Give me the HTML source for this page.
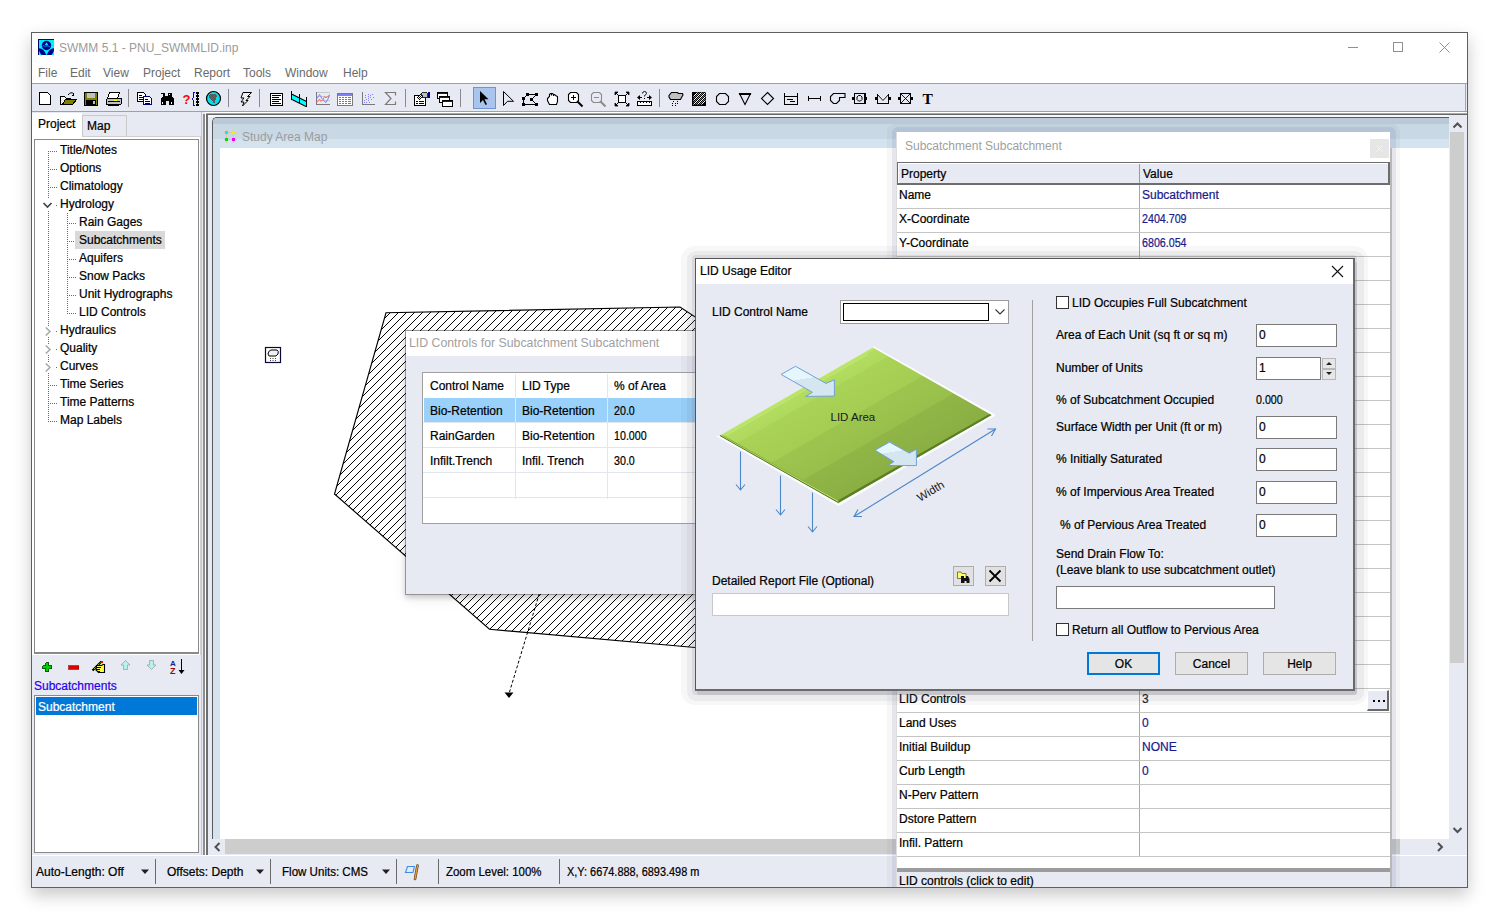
<!DOCTYPE html>
<html><head><meta charset="utf-8">
<style>
*{box-sizing:border-box}
html,body{margin:0;padding:0}
body{width:1500px;height:920px;background:#fff;position:relative;overflow:hidden;font-family:"Liberation Sans",sans-serif;font-size:12px;color:#000}
.a{position:absolute}
.t{position:absolute;white-space:nowrap;line-height:16px;font-size:12px;-webkit-text-stroke:0.22px currentColor}
.g{-webkit-text-stroke:0}
.lav{background:#e8eaf3}
svg{position:absolute;overflow:visible}
</style></head><body>
<!-- main window -->
<div class="a" style="left:31px;top:32px;width:1437px;height:856px;border:1px solid #5f5f5f;background:#fff;box-shadow:0 7px 16px rgba(0,0,0,0.22)"></div>
<!-- title -->
<svg style="left:38px;top:39px" width="16" height="16" viewBox="0 0 16 16"><rect x="0" y="0" width="16" height="16" fill="#000070"/><rect x="1" y="1" width="15" height="15" fill="#00f0ff"/><circle cx="8.5" cy="6.5" r="4.7" fill="#00008c"/><path d="M8.5 3.2L10.3 6.2H6.7Z" fill="#00f0ff"/><path d="M4.5 7.2q1-0.8 2 0t2 0 2 0 2 0" fill="none" stroke="#10a0e0" stroke-width="0.9"/><path d="M1 9.2Q6 9.5 8.3 16H3.5Q1 13 1 11Z" fill="#00008c"/><path d="M16 9.2Q11 9.5 8.7 16H13.5Q16 13 16 11Z" fill="#00008c"/></svg>
<div class="t g" style="left:59px;top:40px;color:#9b9b9b">SWMM 5.1 - PNU_SWMMLID.inp</div>
<div class="a" style="left:1348px;top:47px;width:10px;height:1px;background:#8f8f8f"></div>
<div class="a" style="left:1393px;top:42px;width:10px;height:10px;border:1px solid #8f8f8f"></div>
<svg style="left:1439px;top:42px" width="11" height="11"><path d="M0.5 0.5L10.5 10.5M10.5 0.5L0.5 10.5" stroke="#8f8f8f" stroke-width="1"/></svg>
<!-- menu -->
<div class="t g" style="left:38px;top:65px;color:#6a6a6a">File</div>
<div class="t g" style="left:70px;top:65px;color:#6a6a6a">Edit</div>
<div class="t g" style="left:103px;top:65px;color:#6a6a6a">View</div>
<div class="t g" style="left:143px;top:65px;color:#6a6a6a">Project</div>
<div class="t g" style="left:194px;top:65px;color:#6a6a6a">Report</div>
<div class="t g" style="left:243px;top:65px;color:#6a6a6a">Tools</div>
<div class="t g" style="left:285px;top:65px;color:#6a6a6a">Window</div>
<div class="t g" style="left:343px;top:65px;color:#6a6a6a">Help</div>
<!-- toolbar -->
<div class="a lav" style="left:32px;top:83px;width:1435px;height:29px;border-top:1px solid #a0a0a0;border-bottom:1px solid #a0a0a0"></div>
<div class="a" style="left:1465px;top:84px;width:1px;height:27px;background:#a8a8a8"></div>
<svg style="left:0;top:0" width="1500" height="120" viewBox="0 0 1500 120" shape-rendering="crispEdges">
<defs><pattern id="dith" width="2" height="2" patternUnits="userSpaceOnUse"><rect width="2" height="2" fill="#ffff00"/><rect width="1" height="1" fill="#fff"/><rect x="1" y="1" width="1" height="1" fill="#fff"/></pattern>
<pattern id="dithg" width="2" height="2" patternUnits="userSpaceOnUse"><rect width="2" height="2" fill="#2e8b3a"/><rect width="1" height="1" fill="#555"/><rect x="1" y="1" width="1" height="1" fill="#555"/></pattern>
<pattern id="dithk" width="2" height="2" patternUnits="userSpaceOnUse"><rect width="2" height="2" fill="#fff"/><rect width="1" height="1" fill="#000"/><rect x="1" y="1" width="1" height="1" fill="#000"/></pattern></defs>
<!-- new -->
<path d="M39.5 92.5H47.5L50.5 95.5V104.5H39.5Z" fill="#fff" stroke="#000" stroke-width="1.3"/>
<!-- open -->
<path d="M60.5 96.5H64.5L66 98H70.5V104.5H60.5Z" fill="url(#dith)" stroke="#000"/>
<path d="M62.5 104.5L65.5 99.5H76.5L72.5 104.5Z" fill="#808000" stroke="#000"/>
<path d="M68 95Q71 91 74 94" fill="none" stroke="#000" shape-rendering="auto"/><path d="M73.5 93v2.5h-2" fill="none" stroke="#000"/>
<!-- save -->
<rect x="84.5" y="92.5" width="13" height="13" fill="#808000" stroke="#000" stroke-width="1.2"/>
<rect x="87" y="93" width="8" height="5" fill="#c0c0c0"/>
<rect x="86" y="100" width="10" height="5" fill="#000"/><rect x="93" y="101" width="2" height="3" fill="#c0c0c0"/>
<!-- print -->
<path d="M109.5 92.5H119.5L117.5 98.5H107.5Z" fill="#fff" stroke="#000"/>
<rect x="106.5" y="98.5" width="15" height="6" rx="1.5" fill="#c0c0c0" stroke="#000"/>
<rect x="108" y="101" width="12" height="1" fill="#000"/><rect x="114" y="100" width="3" height="1" fill="#ffff00"/>
<rect x="108" y="104" width="11" height="2" fill="#000"/>
<rect x="128" y="89" width="1" height="18" fill="#8a8a8a"/>
<!-- copy -->
<path d="M137.5 92.5H143.5L145.5 94.5V101.5H137.5Z" fill="#fff" stroke="#000"/>
<rect x="139" y="95" width="3" height="1" fill="#000"/><rect x="139" y="97" width="4" height="1" fill="#000"/><rect x="139" y="99" width="4" height="1" fill="#000"/>
<path d="M143.5 96.5H149.5L151.5 98.5V104.5H143.5Z" fill="#fff" stroke="#000080"/>
<rect x="145" y="99" width="3" height="1" fill="#000"/><rect x="145" y="101" width="5" height="1" fill="#000"/><rect x="145" y="103" width="5" height="1" fill="#000"/>
<!-- binoculars -->
<path d="M161 93h4v3h3v-3h4v3l2 3v6h-5v-4h-3v4h-5v-6l2-3Z" fill="#000"/>
<rect x="162" y="94" width="1" height="1" fill="#fff"/><rect x="169" y="94" width="1" height="1" fill="#fff"/>
<rect x="162" y="102" width="1" height="2" fill="#fff"/><rect x="171" y="102" width="1" height="2" fill="#fff"/>
<!-- ?{ -->
<text x="182.5" y="104" font-family="Liberation Sans" font-weight="bold" font-size="13" fill="#ff0000" shape-rendering="auto">?</text>
<path d="M195 92.5h-1.5v5l-1.5 1.5 1.5 1.5v5h1.5" fill="none" stroke="#0000ff"/>
<rect x="196" y="92" width="3" height="2" fill="#000"/><rect x="196" y="95" width="3" height="2" fill="#000"/><rect x="196" y="98" width="3" height="2" fill="#000"/><rect x="196" y="101" width="3" height="2" fill="#000"/><rect x="196" y="104" width="3" height="2" fill="#000"/>
<rect x="197" y="92" width="1" height="14" fill="#000"/>
<!-- globe -->
<circle cx="213.5" cy="98.5" r="7" fill="#00e0f0" stroke="#000" stroke-width="1.2" shape-rendering="auto"/>
<path d="M209 95q4-3 8 0l-1 4l-2 5l-2-4l-3-2Z" fill="url(#dithg)"/>
<rect x="228" y="89" width="1" height="18" fill="#8a8a8a"/>
<!-- lightning -->
<path d="M243 92.5h8.5l-4 4h2.5l-4 4h2l-5.5 5.5l1.5-4h-3l3-4h-3Z" fill="url(#dith)" stroke="#000" stroke-linejoin="round" shape-rendering="auto"/>
<rect x="259" y="89" width="1" height="18" fill="#8a8a8a"/>
<!-- report -->
<rect x="270.5" y="93.5" width="12" height="12" fill="#fff" stroke="#000" stroke-width="1.1"/>
<rect x="272" y="95" width="9" height="1" fill="#000"/><rect x="272" y="97" width="7" height="1" fill="#000"/><rect x="272" y="99" width="9" height="1" fill="#000"/><rect x="272" y="101" width="7" height="1" fill="#000"/><rect x="272" y="103" width="9" height="1" fill="#000"/>
<!-- profile -->
<path d="M292 94L306 101V106L292 99Z" fill="#00ffff" shape-rendering="auto"/>
<path d="M292 94.3L306 101.3M292 99.5L306 106.5" stroke="#000" stroke-width="1.1" shape-rendering="auto"/>
<rect x="291" y="91" width="1" height="9" fill="#000"/><rect x="299" y="94" width="1" height="9" fill="#000"/><rect x="306" y="97" width="1" height="10" fill="#000"/>
<!-- graph gray -->
<rect x="317" y="92" width="13" height="1" fill="#c8c8c8"/><rect x="317" y="96" width="13" height="1" fill="#c8c8c8"/><rect x="317" y="100" width="13" height="1" fill="#c8c8c8"/>
<rect x="316" y="92" width="1" height="13" fill="#7a7a7a"/><rect x="316" y="104" width="14" height="1" fill="#7a7a7a"/>
<path d="M317 98.5L319.5 94.5L322 98.5L324 101L326 102.5L328 99L329.5 94.5" fill="none" stroke="#8080ff" shape-rendering="auto"/>
<path d="M317 102.5L319.5 99L321 101.5L323 99.5L324.5 96.5L326 98L328 96L329.5 96" fill="none" stroke="#ff7070" shape-rendering="auto"/>
<!-- table -->
<rect x="337.5" y="93.5" width="15" height="12" fill="#fff" stroke="#7a7a7a"/>
<rect x="338" y="94" width="14" height="2" fill="#8080ff"/>
<g fill="#7a7a7a"><rect x="339" y="97" width="2" height="1"/><rect x="342" y="97" width="2" height="1"/><rect x="345" y="97" width="2" height="1"/><rect x="348" y="97" width="3" height="1"/>
<rect x="339" y="99" width="2" height="1"/><rect x="342" y="99" width="2" height="1"/><rect x="345" y="99" width="2" height="1"/><rect x="348" y="99" width="3" height="1"/>
<rect x="339" y="101" width="2" height="1"/><rect x="342" y="101" width="2" height="1"/><rect x="345" y="101" width="2" height="1"/><rect x="348" y="101" width="3" height="1"/>
<rect x="339" y="103" width="2" height="1"/><rect x="342" y="103" width="2" height="1"/><rect x="345" y="103" width="2" height="1"/><rect x="348" y="103" width="3" height="1"/></g>
<!-- scatter -->
<rect x="362" y="92" width="1" height="13" fill="#7a7a7a"/><rect x="362" y="104" width="13" height="1" fill="#7a7a7a"/>
<g fill="#8080ff"><rect x="365" y="95" width="1" height="1"/><rect x="368" y="94" width="1" height="1"/><rect x="370" y="95" width="1" height="1"/><rect x="372" y="94" width="1" height="1"/><rect x="365" y="97" width="1" height="1"/><rect x="368" y="96" width="1" height="1"/><rect x="370" y="97" width="1" height="1"/><rect x="373" y="97" width="1" height="1"/><rect x="368" y="98" width="1" height="1"/><rect x="366" y="99" width="1" height="1"/><rect x="371" y="99" width="1" height="1"/><rect x="364" y="100" width="1" height="1"/><rect x="368" y="100" width="1" height="1"/><rect x="364" y="102" width="1" height="1"/><rect x="366" y="102" width="1" height="1"/><rect x="369" y="102" width="1" height="1"/></g>
<!-- sigma -->
<path d="M395.5 95.5V92.5H385.5L391 98.5L385.5 104.5H395.5V101.5" fill="none" stroke="#7a7a7a" stroke-width="1.2" shape-rendering="auto"/>
<rect x="405" y="89" width="1" height="18" fill="#8a8a8a"/>
<!-- properties -->
<rect x="414.5" y="95.5" width="11" height="10" fill="#fff" stroke="#000" stroke-width="1.1"/>
<rect x="416" y="101" width="2" height="1" fill="#000"/><rect x="419" y="101" width="5" height="1" fill="#000"/><rect x="416" y="103" width="2" height="1" fill="#000"/><rect x="419" y="103" width="5" height="1" fill="#000"/>
<path d="M416 98L421 93L424 96L419 100Z" fill="url(#dithk)"/>
<path d="M421.5 92.5H427V97.5H423Z" fill="#c0c0c0" stroke="#000" stroke-width="0.8"/>
<rect x="428" y="92" width="2" height="6" fill="#000090"/>
<!-- windows -->
<rect x="437.5" y="92.5" width="10" height="6" fill="#fff" stroke="#000"/><rect x="438" y="93" width="9" height="1" fill="#0000ff"/>
<rect x="439.5" y="96.5" width="10" height="6" fill="#fff" stroke="#000"/><rect x="440" y="97" width="9" height="1" fill="#0000ff"/>
<rect x="442.5" y="100.5" width="10" height="6" fill="#fff" stroke="#000"/><rect x="443" y="101" width="9" height="1" fill="#0000ff"/>
<rect x="460" y="89" width="1" height="18" fill="#8a8a8a"/>
<!-- select pressed -->
<rect x="473.5" y="87.5" width="22" height="21" fill="#a9c5ee" stroke="#6f95d0"/>
<path d="M480 91v12l3-3 2.5 5 1.5-0.8-2.5-5h4Z" fill="#000" shape-rendering="auto"/>
<!-- vertex -->
<path d="M503.5 91.5V105.5L507.5 101.3H513.5Z" fill="none" stroke="#000" shape-rendering="auto"/>
<!-- poly select -->
<path d="M527.5 94.5H536.5L531.5 99.5L536.5 104.5H523.5V98.5Z" fill="none" stroke="#000" shape-rendering="auto"/>
<rect x="526" y="93" width="3" height="3" fill="#000"/><rect x="535" y="93" width="3" height="3" fill="#000"/><rect x="522" y="97" width="3" height="3" fill="#000"/><rect x="530" y="98" width="3" height="3" fill="#000"/><rect x="522" y="103" width="3" height="3" fill="#000"/><rect x="535" y="103" width="3" height="3" fill="#000"/>
<!-- hand -->
<path d="M549.5 104.5L547.5 100.5V98.5L549.5 96.5V94.5L550.5 93.5H551.5V95.5V93.5H552.5L553.5 94.5V96V94.5L554.5 94.5L555.5 95.5L557.5 96.5V101.5L556.5 104.5Z" fill="#fff" stroke="#000" stroke-width="1.1" shape-rendering="auto"/>
<!-- zoom in -->
<path d="M570.5 92.5H576.5L578.5 94.5V100.5L576.5 102.5H570.5L568.5 100.5V94.5Z" fill="#fff" stroke="#000" stroke-width="1.1" shape-rendering="auto"/>
<rect x="571" y="97" width="5" height="1" fill="#000"/><rect x="573" y="95" width="1" height="5" fill="#000"/>
<path d="M577.5 101.5L582.5 106.5" stroke="#000" stroke-width="2" shape-rendering="auto"/>
<!-- zoom out -->
<path d="M593.5 92.5H599.5L601.5 94.5V100.5L599.5 102.5H593.5L591.5 100.5V94.5Z" fill="none" stroke="#8a8a8a" stroke-width="1.1" shape-rendering="auto"/>
<rect x="594" y="97" width="5" height="1" fill="#8a8a8a"/>
<path d="M600.5 101.5L605.5 106.5" stroke="#8a8a8a" stroke-width="2" shape-rendering="auto"/>
<!-- full extent -->
<rect x="618.5" y="95.5" width="7" height="7" fill="#fff" stroke="#000" stroke-width="1.5"/>
<path d="M615 92h3l-3 3Z M629 92h-3l3 3Z M615 106h3l-3-3Z M629 106h-3l3-3Z" fill="#000" stroke="#000" stroke-width="0.8" shape-rendering="auto"/>
<path d="M616 93l2 2M628 93l-2 2M616 105l2-2M628 105l-2-2" stroke="#000" shape-rendering="auto"/>
<!-- measure -->
<rect x="637.5" y="101.5" width="14" height="4" fill="#fff" stroke="#000" stroke-width="1.1"/>
<rect x="640" y="102" width="1" height="1" fill="#000"/><rect x="643" y="102" width="1" height="1" fill="#000"/><rect x="646" y="102" width="1" height="1" fill="#000"/><rect x="649" y="102" width="1" height="1" fill="#000"/>
<rect x="638" y="97" width="4" height="1" fill="#000"/><rect x="647" y="97" width="4" height="1" fill="#000"/>
<path d="M637 97.5L640 95V100Z M652 97.5L649 95V100Z" fill="#000" shape-rendering="auto"/>
<path d="M642.5 93.5Q642.5 91.5 644.5 91.5Q646.5 91.5 646.5 93.5Q646.5 94.5 644.5 95.5V96.5" fill="none" stroke="#000" stroke-width="0.9" shape-rendering="auto"/><rect x="644" y="98" width="1" height="1" fill="#000"/>
<rect x="659" y="89" width="1" height="18" fill="#8a8a8a"/>
<!-- rain gage -->
<path d="M671.5 92.5H677.5L678.5 93.5H682.5L683 95L681.5 97.5L680.5 99.5H670.5L669 97V95.5Z" fill="#c0c0c0" stroke="#000" stroke-width="1.1" shape-rendering="auto"/>
<g fill="#000"><rect x="673" y="101" width="1" height="1"/><rect x="677" y="101" width="1" height="1"/><rect x="672" y="103" width="1" height="1"/><rect x="675" y="103" width="1" height="1"/><rect x="677" y="103" width="1" height="1"/><rect x="672" y="105" width="1" height="1"/><rect x="675" y="105" width="1" height="1"/></g>
<!-- hatch -->
<rect x="692.5" y="92.5" width="13" height="13" fill="#000" stroke="#000"/>
<path d="M693.5 96.5L697.5 92.5M693.5 100.5L701.5 92.5M693.5 104.5L705.5 92.5M697.5 104.5L705.5 96.5M701.5 104.5L705.5 100.5" stroke="#fff" stroke-width="1" shape-rendering="auto"/>
<path d="M693.5 98.5L699.5 92.5M693.5 102.5L703.5 92.5M695.5 104.5L705.5 94.5M699.5 104.5L705.5 98.5" stroke="#999" stroke-width="0.9" shape-rendering="auto"/>
<!-- circle (octagon) -->
<path d="M719.5 93.5H725.5L728.5 96.5V101.5L725.5 104.5H719.5L716.5 101.5V96.5Z" fill="none" stroke="#000" stroke-width="1.1" shape-rendering="auto"/>
<!-- triangle -->
<path d="M739.5 93.5H750.5L745 104.5Z" fill="none" stroke="#000" stroke-width="1.1" shape-rendering="auto"/><rect x="739" y="93" width="12" height="2" fill="#000"/>
<!-- diamond -->
<path d="M767.5 92.5L773.5 98.5L767.5 104.5L761.5 98.5Z" fill="none" stroke="#000" stroke-width="1.1" shape-rendering="auto"/>
<!-- storage -->
<rect x="784" y="93" width="1" height="12" fill="#000"/><rect x="797" y="93" width="1" height="12" fill="#000"/><rect x="784" y="96" width="14" height="1" fill="#000"/><rect x="784" y="104" width="14" height="1" fill="#000"/>
<rect x="787" y="99" width="6" height="1" fill="#000"/><rect x="790" y="101" width="5" height="1" fill="#000"/>
<!-- conduit -->
<rect x="808" y="96" width="1" height="5" fill="#000"/><rect x="820" y="96" width="1" height="5" fill="#000"/><rect x="808" y="98" width="13" height="1" fill="#000"/>
<!-- pump -->
<path d="M833.5 93.5H845V97.5H839.5V100.5L836.5 103.5H833.5L830.5 100.5V96.5Z" fill="none" stroke="#000" stroke-width="1.1" shape-rendering="auto"/>
<!-- orifice -->
<rect x="854.5" y="93.5" width="10.5" height="10" fill="none" stroke="#000" stroke-width="1.1"/>
<path d="M858.5 95.5H860.5L862 97V99.5L860.5 101H858.5L857 99.5V97Z" fill="none" stroke="#000" stroke-width="1" shape-rendering="auto"/>
<rect x="852" y="97" width="2" height="3" fill="#000"/><rect x="865" y="97" width="2" height="3" fill="#000"/>
<!-- weir -->
<path d="M877.5 94V103.5H888.5V94" fill="none" stroke="#000" stroke-width="1.1"/>
<path d="M877.5 94.5L883 100.5L888.5 94.5" fill="none" stroke="#000" stroke-width="0.9" shape-rendering="auto"/>
<rect x="875" y="97" width="2" height="3" fill="#000"/><rect x="889" y="97" width="2" height="3" fill="#000"/>
<!-- outlet -->
<rect x="900.5" y="93.5" width="10" height="10" fill="none" stroke="#000" stroke-width="1.4"/>
<path d="M901 94L910 103M910 94L901 103" stroke="#000" stroke-width="0.9" shape-rendering="auto"/>
<rect x="898" y="97" width="2" height="3" fill="#000"/><rect x="911" y="97" width="2" height="3" fill="#000"/>
<!-- T -->
<text x="922.5" y="104" font-family="Liberation Serif" font-weight="bold" font-size="15.5" fill="#000" shape-rendering="auto">T</text>
</svg>


<!-- left panel -->
<div class="a" style="left:32px;top:112px;width:173px;height:744px;background:#e8eaf3"></div>
<div class="a" style="left:82px;top:115px;width:45px;height:21px;background:#e8eaf3;border:1px solid #c9c9c9;border-bottom:none"></div>
<div class="a" style="left:32px;top:113px;width:50px;height:24px;background:#fff"></div>
<div class="t" style="left:38px;top:116px">Project</div>
<div class="t" style="left:87px;top:118px">Map</div>
<div class="a" style="left:32px;top:136px;width:169px;height:519px;background:#fff;border-right:1px solid #cfcfcf"></div>
<div class="a" style="left:82px;top:136px;width:119px;height:1px;background:#cfcfcf"></div>
<div class="a" style="left:34px;top:139px;width:165px;height:515px;background:#fff;border:1px solid #8a8a8a;border-bottom:2px solid #8a8a8a"></div>
<svg style="left:0;top:0" width="220" height="440" shape-rendering="crispEdges">
<rect x="48" y="151" width="1" height="1" fill="#6a6a6a"/>
<rect x="48" y="153" width="1" height="1" fill="#6a6a6a"/>
<rect x="48" y="155" width="1" height="1" fill="#6a6a6a"/>
<rect x="48" y="157" width="1" height="1" fill="#6a6a6a"/>
<rect x="48" y="159" width="1" height="1" fill="#6a6a6a"/>
<rect x="48" y="161" width="1" height="1" fill="#6a6a6a"/>
<rect x="48" y="163" width="1" height="1" fill="#6a6a6a"/>
<rect x="48" y="165" width="1" height="1" fill="#6a6a6a"/>
<rect x="48" y="167" width="1" height="1" fill="#6a6a6a"/>
<rect x="48" y="169" width="1" height="1" fill="#6a6a6a"/>
<rect x="48" y="171" width="1" height="1" fill="#6a6a6a"/>
<rect x="48" y="173" width="1" height="1" fill="#6a6a6a"/>
<rect x="48" y="175" width="1" height="1" fill="#6a6a6a"/>
<rect x="48" y="177" width="1" height="1" fill="#6a6a6a"/>
<rect x="48" y="179" width="1" height="1" fill="#6a6a6a"/>
<rect x="48" y="181" width="1" height="1" fill="#6a6a6a"/>
<rect x="48" y="183" width="1" height="1" fill="#6a6a6a"/>
<rect x="48" y="185" width="1" height="1" fill="#6a6a6a"/>
<rect x="48" y="187" width="1" height="1" fill="#6a6a6a"/>
<rect x="48" y="189" width="1" height="1" fill="#6a6a6a"/>
<rect x="48" y="191" width="1" height="1" fill="#6a6a6a"/>
<rect x="48" y="193" width="1" height="1" fill="#6a6a6a"/>
<rect x="48" y="195" width="1" height="1" fill="#6a6a6a"/>
<rect x="48" y="197" width="1" height="1" fill="#6a6a6a"/>
<rect x="48" y="199" width="1" height="1" fill="#6a6a6a"/>
<rect x="48" y="201" width="1" height="1" fill="#6a6a6a"/>
<rect x="48" y="203" width="1" height="1" fill="#6a6a6a"/>
<rect x="48" y="205" width="1" height="1" fill="#6a6a6a"/>
<rect x="48" y="207" width="1" height="1" fill="#6a6a6a"/>
<rect x="48" y="209" width="1" height="1" fill="#6a6a6a"/>
<rect x="48" y="211" width="1" height="1" fill="#6a6a6a"/>
<rect x="48" y="213" width="1" height="1" fill="#6a6a6a"/>
<rect x="48" y="215" width="1" height="1" fill="#6a6a6a"/>
<rect x="48" y="217" width="1" height="1" fill="#6a6a6a"/>
<rect x="48" y="219" width="1" height="1" fill="#6a6a6a"/>
<rect x="48" y="221" width="1" height="1" fill="#6a6a6a"/>
<rect x="48" y="223" width="1" height="1" fill="#6a6a6a"/>
<rect x="48" y="225" width="1" height="1" fill="#6a6a6a"/>
<rect x="48" y="227" width="1" height="1" fill="#6a6a6a"/>
<rect x="48" y="229" width="1" height="1" fill="#6a6a6a"/>
<rect x="48" y="231" width="1" height="1" fill="#6a6a6a"/>
<rect x="48" y="233" width="1" height="1" fill="#6a6a6a"/>
<rect x="48" y="235" width="1" height="1" fill="#6a6a6a"/>
<rect x="48" y="237" width="1" height="1" fill="#6a6a6a"/>
<rect x="48" y="239" width="1" height="1" fill="#6a6a6a"/>
<rect x="48" y="241" width="1" height="1" fill="#6a6a6a"/>
<rect x="48" y="243" width="1" height="1" fill="#6a6a6a"/>
<rect x="48" y="245" width="1" height="1" fill="#6a6a6a"/>
<rect x="48" y="247" width="1" height="1" fill="#6a6a6a"/>
<rect x="48" y="249" width="1" height="1" fill="#6a6a6a"/>
<rect x="48" y="251" width="1" height="1" fill="#6a6a6a"/>
<rect x="48" y="253" width="1" height="1" fill="#6a6a6a"/>
<rect x="48" y="255" width="1" height="1" fill="#6a6a6a"/>
<rect x="48" y="257" width="1" height="1" fill="#6a6a6a"/>
<rect x="48" y="259" width="1" height="1" fill="#6a6a6a"/>
<rect x="48" y="261" width="1" height="1" fill="#6a6a6a"/>
<rect x="48" y="263" width="1" height="1" fill="#6a6a6a"/>
<rect x="48" y="265" width="1" height="1" fill="#6a6a6a"/>
<rect x="48" y="267" width="1" height="1" fill="#6a6a6a"/>
<rect x="48" y="269" width="1" height="1" fill="#6a6a6a"/>
<rect x="48" y="271" width="1" height="1" fill="#6a6a6a"/>
<rect x="48" y="273" width="1" height="1" fill="#6a6a6a"/>
<rect x="48" y="275" width="1" height="1" fill="#6a6a6a"/>
<rect x="48" y="277" width="1" height="1" fill="#6a6a6a"/>
<rect x="48" y="279" width="1" height="1" fill="#6a6a6a"/>
<rect x="48" y="281" width="1" height="1" fill="#6a6a6a"/>
<rect x="48" y="283" width="1" height="1" fill="#6a6a6a"/>
<rect x="48" y="285" width="1" height="1" fill="#6a6a6a"/>
<rect x="48" y="287" width="1" height="1" fill="#6a6a6a"/>
<rect x="48" y="289" width="1" height="1" fill="#6a6a6a"/>
<rect x="48" y="291" width="1" height="1" fill="#6a6a6a"/>
<rect x="48" y="293" width="1" height="1" fill="#6a6a6a"/>
<rect x="48" y="295" width="1" height="1" fill="#6a6a6a"/>
<rect x="48" y="297" width="1" height="1" fill="#6a6a6a"/>
<rect x="48" y="299" width="1" height="1" fill="#6a6a6a"/>
<rect x="48" y="301" width="1" height="1" fill="#6a6a6a"/>
<rect x="48" y="303" width="1" height="1" fill="#6a6a6a"/>
<rect x="48" y="305" width="1" height="1" fill="#6a6a6a"/>
<rect x="48" y="307" width="1" height="1" fill="#6a6a6a"/>
<rect x="48" y="309" width="1" height="1" fill="#6a6a6a"/>
<rect x="48" y="311" width="1" height="1" fill="#6a6a6a"/>
<rect x="48" y="313" width="1" height="1" fill="#6a6a6a"/>
<rect x="48" y="315" width="1" height="1" fill="#6a6a6a"/>
<rect x="48" y="317" width="1" height="1" fill="#6a6a6a"/>
<rect x="48" y="319" width="1" height="1" fill="#6a6a6a"/>
<rect x="48" y="321" width="1" height="1" fill="#6a6a6a"/>
<rect x="48" y="323" width="1" height="1" fill="#6a6a6a"/>
<rect x="48" y="325" width="1" height="1" fill="#6a6a6a"/>
<rect x="48" y="327" width="1" height="1" fill="#6a6a6a"/>
<rect x="48" y="329" width="1" height="1" fill="#6a6a6a"/>
<rect x="48" y="331" width="1" height="1" fill="#6a6a6a"/>
<rect x="48" y="333" width="1" height="1" fill="#6a6a6a"/>
<rect x="48" y="335" width="1" height="1" fill="#6a6a6a"/>
<rect x="48" y="337" width="1" height="1" fill="#6a6a6a"/>
<rect x="48" y="339" width="1" height="1" fill="#6a6a6a"/>
<rect x="48" y="341" width="1" height="1" fill="#6a6a6a"/>
<rect x="48" y="343" width="1" height="1" fill="#6a6a6a"/>
<rect x="48" y="345" width="1" height="1" fill="#6a6a6a"/>
<rect x="48" y="347" width="1" height="1" fill="#6a6a6a"/>
<rect x="48" y="349" width="1" height="1" fill="#6a6a6a"/>
<rect x="48" y="351" width="1" height="1" fill="#6a6a6a"/>
<rect x="48" y="353" width="1" height="1" fill="#6a6a6a"/>
<rect x="48" y="355" width="1" height="1" fill="#6a6a6a"/>
<rect x="48" y="357" width="1" height="1" fill="#6a6a6a"/>
<rect x="48" y="359" width="1" height="1" fill="#6a6a6a"/>
<rect x="48" y="361" width="1" height="1" fill="#6a6a6a"/>
<rect x="48" y="363" width="1" height="1" fill="#6a6a6a"/>
<rect x="48" y="365" width="1" height="1" fill="#6a6a6a"/>
<rect x="48" y="367" width="1" height="1" fill="#6a6a6a"/>
<rect x="48" y="369" width="1" height="1" fill="#6a6a6a"/>
<rect x="48" y="371" width="1" height="1" fill="#6a6a6a"/>
<rect x="48" y="373" width="1" height="1" fill="#6a6a6a"/>
<rect x="48" y="375" width="1" height="1" fill="#6a6a6a"/>
<rect x="48" y="377" width="1" height="1" fill="#6a6a6a"/>
<rect x="48" y="379" width="1" height="1" fill="#6a6a6a"/>
<rect x="48" y="381" width="1" height="1" fill="#6a6a6a"/>
<rect x="48" y="383" width="1" height="1" fill="#6a6a6a"/>
<rect x="48" y="385" width="1" height="1" fill="#6a6a6a"/>
<rect x="48" y="387" width="1" height="1" fill="#6a6a6a"/>
<rect x="48" y="389" width="1" height="1" fill="#6a6a6a"/>
<rect x="48" y="391" width="1" height="1" fill="#6a6a6a"/>
<rect x="48" y="393" width="1" height="1" fill="#6a6a6a"/>
<rect x="48" y="395" width="1" height="1" fill="#6a6a6a"/>
<rect x="48" y="397" width="1" height="1" fill="#6a6a6a"/>
<rect x="48" y="399" width="1" height="1" fill="#6a6a6a"/>
<rect x="48" y="401" width="1" height="1" fill="#6a6a6a"/>
<rect x="48" y="403" width="1" height="1" fill="#6a6a6a"/>
<rect x="48" y="405" width="1" height="1" fill="#6a6a6a"/>
<rect x="48" y="407" width="1" height="1" fill="#6a6a6a"/>
<rect x="48" y="409" width="1" height="1" fill="#6a6a6a"/>
<rect x="48" y="411" width="1" height="1" fill="#6a6a6a"/>
<rect x="48" y="413" width="1" height="1" fill="#6a6a6a"/>
<rect x="48" y="415" width="1" height="1" fill="#6a6a6a"/>
<rect x="48" y="417" width="1" height="1" fill="#6a6a6a"/>
<rect x="48" y="419" width="1" height="1" fill="#6a6a6a"/>
<rect x="48" y="421" width="1" height="1" fill="#6a6a6a"/>
<rect x="50" y="151" width="1" height="1" fill="#6a6a6a"/>
<rect x="52" y="151" width="1" height="1" fill="#6a6a6a"/>
<rect x="54" y="151" width="1" height="1" fill="#6a6a6a"/>
<rect x="56" y="151" width="1" height="1" fill="#6a6a6a"/>
<rect x="50" y="169" width="1" height="1" fill="#6a6a6a"/>
<rect x="52" y="169" width="1" height="1" fill="#6a6a6a"/>
<rect x="54" y="169" width="1" height="1" fill="#6a6a6a"/>
<rect x="56" y="169" width="1" height="1" fill="#6a6a6a"/>
<rect x="50" y="187" width="1" height="1" fill="#6a6a6a"/>
<rect x="52" y="187" width="1" height="1" fill="#6a6a6a"/>
<rect x="54" y="187" width="1" height="1" fill="#6a6a6a"/>
<rect x="56" y="187" width="1" height="1" fill="#6a6a6a"/>
<rect x="50" y="205" width="1" height="1" fill="#6a6a6a"/>
<rect x="52" y="205" width="1" height="1" fill="#6a6a6a"/>
<rect x="54" y="205" width="1" height="1" fill="#6a6a6a"/>
<rect x="56" y="205" width="1" height="1" fill="#6a6a6a"/>
<rect x="69" y="223" width="1" height="1" fill="#6a6a6a"/>
<rect x="71" y="223" width="1" height="1" fill="#6a6a6a"/>
<rect x="73" y="223" width="1" height="1" fill="#6a6a6a"/>
<rect x="75" y="223" width="1" height="1" fill="#6a6a6a"/>
<rect x="69" y="241" width="1" height="1" fill="#6a6a6a"/>
<rect x="71" y="241" width="1" height="1" fill="#6a6a6a"/>
<rect x="73" y="241" width="1" height="1" fill="#6a6a6a"/>
<rect x="75" y="241" width="1" height="1" fill="#6a6a6a"/>
<rect x="69" y="259" width="1" height="1" fill="#6a6a6a"/>
<rect x="71" y="259" width="1" height="1" fill="#6a6a6a"/>
<rect x="73" y="259" width="1" height="1" fill="#6a6a6a"/>
<rect x="75" y="259" width="1" height="1" fill="#6a6a6a"/>
<rect x="69" y="277" width="1" height="1" fill="#6a6a6a"/>
<rect x="71" y="277" width="1" height="1" fill="#6a6a6a"/>
<rect x="73" y="277" width="1" height="1" fill="#6a6a6a"/>
<rect x="75" y="277" width="1" height="1" fill="#6a6a6a"/>
<rect x="69" y="295" width="1" height="1" fill="#6a6a6a"/>
<rect x="71" y="295" width="1" height="1" fill="#6a6a6a"/>
<rect x="73" y="295" width="1" height="1" fill="#6a6a6a"/>
<rect x="75" y="295" width="1" height="1" fill="#6a6a6a"/>
<rect x="69" y="313" width="1" height="1" fill="#6a6a6a"/>
<rect x="71" y="313" width="1" height="1" fill="#6a6a6a"/>
<rect x="73" y="313" width="1" height="1" fill="#6a6a6a"/>
<rect x="75" y="313" width="1" height="1" fill="#6a6a6a"/>
<rect x="50" y="331" width="1" height="1" fill="#6a6a6a"/>
<rect x="52" y="331" width="1" height="1" fill="#6a6a6a"/>
<rect x="54" y="331" width="1" height="1" fill="#6a6a6a"/>
<rect x="56" y="331" width="1" height="1" fill="#6a6a6a"/>
<rect x="50" y="349" width="1" height="1" fill="#6a6a6a"/>
<rect x="52" y="349" width="1" height="1" fill="#6a6a6a"/>
<rect x="54" y="349" width="1" height="1" fill="#6a6a6a"/>
<rect x="56" y="349" width="1" height="1" fill="#6a6a6a"/>
<rect x="50" y="367" width="1" height="1" fill="#6a6a6a"/>
<rect x="52" y="367" width="1" height="1" fill="#6a6a6a"/>
<rect x="54" y="367" width="1" height="1" fill="#6a6a6a"/>
<rect x="56" y="367" width="1" height="1" fill="#6a6a6a"/>
<rect x="50" y="385" width="1" height="1" fill="#6a6a6a"/>
<rect x="52" y="385" width="1" height="1" fill="#6a6a6a"/>
<rect x="54" y="385" width="1" height="1" fill="#6a6a6a"/>
<rect x="56" y="385" width="1" height="1" fill="#6a6a6a"/>
<rect x="50" y="403" width="1" height="1" fill="#6a6a6a"/>
<rect x="52" y="403" width="1" height="1" fill="#6a6a6a"/>
<rect x="54" y="403" width="1" height="1" fill="#6a6a6a"/>
<rect x="56" y="403" width="1" height="1" fill="#6a6a6a"/>
<rect x="50" y="421" width="1" height="1" fill="#6a6a6a"/>
<rect x="52" y="421" width="1" height="1" fill="#6a6a6a"/>
<rect x="54" y="421" width="1" height="1" fill="#6a6a6a"/>
<rect x="56" y="421" width="1" height="1" fill="#6a6a6a"/>
<rect x="67" y="213" width="1" height="1" fill="#6a6a6a"/>
<rect x="67" y="215" width="1" height="1" fill="#6a6a6a"/>
<rect x="67" y="217" width="1" height="1" fill="#6a6a6a"/>
<rect x="67" y="219" width="1" height="1" fill="#6a6a6a"/>
<rect x="67" y="221" width="1" height="1" fill="#6a6a6a"/>
<rect x="67" y="223" width="1" height="1" fill="#6a6a6a"/>
<rect x="67" y="225" width="1" height="1" fill="#6a6a6a"/>
<rect x="67" y="227" width="1" height="1" fill="#6a6a6a"/>
<rect x="67" y="229" width="1" height="1" fill="#6a6a6a"/>
<rect x="67" y="231" width="1" height="1" fill="#6a6a6a"/>
<rect x="67" y="233" width="1" height="1" fill="#6a6a6a"/>
<rect x="67" y="235" width="1" height="1" fill="#6a6a6a"/>
<rect x="67" y="237" width="1" height="1" fill="#6a6a6a"/>
<rect x="67" y="239" width="1" height="1" fill="#6a6a6a"/>
<rect x="67" y="241" width="1" height="1" fill="#6a6a6a"/>
<rect x="67" y="243" width="1" height="1" fill="#6a6a6a"/>
<rect x="67" y="245" width="1" height="1" fill="#6a6a6a"/>
<rect x="67" y="247" width="1" height="1" fill="#6a6a6a"/>
<rect x="67" y="249" width="1" height="1" fill="#6a6a6a"/>
<rect x="67" y="251" width="1" height="1" fill="#6a6a6a"/>
<rect x="67" y="253" width="1" height="1" fill="#6a6a6a"/>
<rect x="67" y="255" width="1" height="1" fill="#6a6a6a"/>
<rect x="67" y="257" width="1" height="1" fill="#6a6a6a"/>
<rect x="67" y="259" width="1" height="1" fill="#6a6a6a"/>
<rect x="67" y="261" width="1" height="1" fill="#6a6a6a"/>
<rect x="67" y="263" width="1" height="1" fill="#6a6a6a"/>
<rect x="67" y="265" width="1" height="1" fill="#6a6a6a"/>
<rect x="67" y="267" width="1" height="1" fill="#6a6a6a"/>
<rect x="67" y="269" width="1" height="1" fill="#6a6a6a"/>
<rect x="67" y="271" width="1" height="1" fill="#6a6a6a"/>
<rect x="67" y="273" width="1" height="1" fill="#6a6a6a"/>
<rect x="67" y="275" width="1" height="1" fill="#6a6a6a"/>
<rect x="67" y="277" width="1" height="1" fill="#6a6a6a"/>
<rect x="67" y="279" width="1" height="1" fill="#6a6a6a"/>
<rect x="67" y="281" width="1" height="1" fill="#6a6a6a"/>
<rect x="67" y="283" width="1" height="1" fill="#6a6a6a"/>
<rect x="67" y="285" width="1" height="1" fill="#6a6a6a"/>
<rect x="67" y="287" width="1" height="1" fill="#6a6a6a"/>
<rect x="67" y="289" width="1" height="1" fill="#6a6a6a"/>
<rect x="67" y="291" width="1" height="1" fill="#6a6a6a"/>
<rect x="67" y="293" width="1" height="1" fill="#6a6a6a"/>
<rect x="67" y="295" width="1" height="1" fill="#6a6a6a"/>
<rect x="67" y="297" width="1" height="1" fill="#6a6a6a"/>
<rect x="67" y="299" width="1" height="1" fill="#6a6a6a"/>
<rect x="67" y="301" width="1" height="1" fill="#6a6a6a"/>
<rect x="67" y="303" width="1" height="1" fill="#6a6a6a"/>
<rect x="67" y="305" width="1" height="1" fill="#6a6a6a"/>
<rect x="67" y="307" width="1" height="1" fill="#6a6a6a"/>
<rect x="67" y="309" width="1" height="1" fill="#6a6a6a"/>
<rect x="67" y="311" width="1" height="1" fill="#6a6a6a"/>
<rect x="67" y="313" width="1" height="1" fill="#6a6a6a"/>
<rect x="41" y="199" width="14" height="11" fill="#fff"/><path d="M43.5 203L47.5 207L51.5 203" fill="none" stroke="#3d4550" stroke-width="1.7" shape-rendering="auto"/>
<rect x="43" y="326" width="13" height="11" fill="#fff"/><path d="M45.8 327.5L50 331.5L45.8 335.5" fill="none" stroke="#a6a6a6" stroke-width="1.5" shape-rendering="auto"/>
<rect x="43" y="344" width="13" height="11" fill="#fff"/><path d="M45.8 345.5L50 349.5L45.8 353.5" fill="none" stroke="#a6a6a6" stroke-width="1.5" shape-rendering="auto"/>
<rect x="43" y="362" width="13" height="11" fill="#fff"/><path d="M45.8 363.5L50 367.5L45.8 371.5" fill="none" stroke="#a6a6a6" stroke-width="1.5" shape-rendering="auto"/>
</svg>
<div class="a" style="left:75px;top:231px;width:90px;height:18px;background:#d9d9d9"></div>
<div class="t" style="left:60px;top:142px">Title/Notes</div>
<div class="t" style="left:60px;top:160px">Options</div>
<div class="t" style="left:60px;top:178px">Climatology</div>
<div class="t" style="left:60px;top:196px">Hydrology</div>
<div class="t" style="left:79px;top:214px">Rain Gages</div>
<div class="t" style="left:79px;top:232px">Subcatchments</div>
<div class="t" style="left:79px;top:250px">Aquifers</div>
<div class="t" style="left:79px;top:268px">Snow Packs</div>
<div class="t" style="left:79px;top:286px">Unit Hydrographs</div>
<div class="t" style="left:79px;top:304px">LID Controls</div>
<div class="t" style="left:60px;top:322px">Hydraulics</div>
<div class="t" style="left:60px;top:340px">Quality</div>
<div class="t" style="left:60px;top:358px">Curves</div>
<div class="t" style="left:60px;top:376px">Time Series</div>
<div class="t" style="left:60px;top:394px">Time Patterns</div>
<div class="t" style="left:60px;top:412px">Map Labels</div>
<svg style="left:0;top:650px" width="220" height="40" viewBox="0 650 220 40" shape-rendering="crispEdges">
<path d="M45.5 662.5h3v3h3v3h-3v3h-3v-3h-3v-3h3Z" fill="#00d000" stroke="#005000" stroke-width="0.9"/>
<rect x="68.5" y="665.5" width="10" height="3.5" fill="#e00000" stroke="#900000" stroke-width="0.7"/>
<path d="M92.5 670.5L101.5 661.5" stroke="#000" stroke-width="2.2" shape-rendering="auto"/><path d="M94 669L100.5 662.5" stroke="#ffff00" stroke-width="0.9" stroke-dasharray="1 1" shape-rendering="auto"/>
<rect x="101" y="661" width="1.5" height="1.5" fill="#f00"/>
<path d="M96.5 665.5H101.5L103 664.5H104.5V672.5H98.5L96 670Z" fill="#ffff40" stroke="#000" stroke-width="1.1" shape-rendering="auto"/>
<path d="M96 667.5H101M96 669.5H100M97 671.5H100" stroke="#000" stroke-width="1" shape-rendering="auto"/>
<path d="M125.5 660.5l4.5 4.5h-2.5v4.5h-4v-4.5h-2.5Z" fill="#b8f0f0" stroke="#90a8a8" stroke-width="0.8" shape-rendering="auto"/>
<path d="M151.5 669.5l-4.5-4.5h2.5v-4.5h4v4.5h2.5Z" fill="#b8f0f0" stroke="#90a8a8" stroke-width="0.8" shape-rendering="auto"/>
<text x="170" y="666" font-family="Liberation Sans" font-weight="bold" font-size="8" fill="#202090">A</text>
<text x="170" y="674" font-family="Liberation Sans" font-weight="bold" font-size="9" fill="#901010">Z</text>
<path d="M181.5 659v13" stroke="#000" stroke-width="1.2"/><path d="M178.5 670l3 4 3-4Z" fill="#000" shape-rendering="auto"/>
</svg>
<div class="t" style="left:34px;top:678px;color:#2a00f0">Subcatchments</div>
<div class="a" style="left:34px;top:695px;width:165px;height:158px;background:#fff;border:1px solid #8a8a8a"></div>
<div class="a" style="left:36px;top:697px;width:161px;height:18px;background:#0078d7"></div>
<div class="t" style="left:38px;top:699px;color:#fff">Subcatchment</div>
<div class="a" style="left:201px;top:112px;width:1px;height:744px;background:#c6c6c6"></div>
<div class="a" style="left:203px;top:114px;width:2px;height:742px;background:#8d8d8d"></div>
<div class="a" style="left:205px;top:114px;width:1px;height:742px;background:#fff"></div>

<!-- MDI area -->
<!-- MDI client -->
<div class="a" style="left:206px;top:113px;width:1261px;height:743px;background:#e8eaf3;border-left:2px solid #6e6e6e"></div>
<div class="a" style="left:206px;top:113px;width:1261px;height:1px;background:#a8a8a8"></div>
<div class="a" style="left:206px;top:114px;width:1261px;height:1px;background:#666"></div>
<div class="a" style="left:208px;top:115px;width:1259px;height:2px;background:#f7f8fc"></div>
<!-- map window -->
<div class="a" style="left:212px;top:117px;width:1237px;height:722px;background:#d5e3ef;border-left:1px solid #5a5a5a;border-top:1px solid #5a5a5a;border-top-left-radius:5px;overflow:hidden">
 <div class="a" style="left:0;top:0;width:1240px;height:6px;background:#bac9d7"></div>
 <div class="a" style="left:0;top:6px;width:1240px;height:15px;background:#c8d8e5"></div>
</div>
<svg style="left:224px;top:130px" width="13" height="13" shape-rendering="crispEdges"><path d="M2.5 0v13M9.5 0v13M0 2.5h13M0 9.5h13" stroke="#d9c2b8" stroke-width="1"/><rect x="1" y="1" width="3" height="3" fill="#00f0f0"/><rect x="8" y="1" width="3" height="3" fill="#f0f000"/><rect x="1" y="8" width="3" height="3" fill="#00e000"/><rect x="8" y="8" width="3" height="3" fill="#f000f0"/></svg>
<div class="t g" style="left:242px;top:129px;color:#9c9c9c">Study Area Map</div>
<div class="a" style="left:220px;top:148px;width:1229px;height:691px;background:#fff"></div>
<!-- map content -->
<svg style="left:0;top:0" width="1500" height="920" viewBox="0 0 1500 920">
<defs><pattern id="hatch" width="8" height="8" patternUnits="userSpaceOnUse" x="7" y="0"><path d="M-1 9L9 -1" stroke="#000" stroke-width="1.1" shape-rendering="crispEdges"/><path d="M-5 5L5 -5M3 13L13 3" stroke="#000" stroke-width="1.1" shape-rendering="crispEdges"/></pattern></defs>
<path d="M386 312.8L680 307L696 317.5L730 330L730 660L695 647.5L489.5 629.3L334.5 494Z" fill="url(#hatch)" stroke="#000" stroke-width="1.15"/>
<path d="M548 565L509.5 692" stroke="#000" stroke-width="1" stroke-dasharray="3 2"/>
<path d="M504.5 692.5h9l-4.5 5.5Z" fill="#000"/>
<rect x="265.5" y="347.5" width="15" height="15" fill="#fff" stroke="#0a0a3a" stroke-width="1.2"/>
<path d="M268 354q0-3 3-4h6q2 1 1 4l-2 2h-7Z" fill="#eef2f7" stroke="#000" stroke-width="1"/>
<path d="M270.5 358v1M273 358v1M275.5 358v1M270.5 360v1M273 360v1M275.5 360v1" stroke="#444" stroke-width="1"/>
</svg>
<!-- LID controls dialog (inactive) -->
<div class="a" style="left:405px;top:330px;width:300px;height:265px;box-shadow:0 3px 5px rgba(0,0,0,0.16),0 4px 14px rgba(0,0,0,0.07)"></div>
<div class="a" style="left:405px;top:330px;width:300px;height:265px;background:#e8eaf3;background-clip:padding-box;border:1px solid rgba(0,0,0,0.42);border-right:none">
 <div class="a" style="left:0;top:0;width:300px;height:25px;background:#fff"></div>
</div>
<div class="t g" style="left:409px;top:335px;color:#a0a0a0;font-size:12.3px">LID Controls for Subcatchment Subcatchment</div>
<div class="a" style="left:422px;top:372px;width:290px;height:152px;background:#fff;border:1px solid #a0a0a0"></div>
<div class="a" style="left:424px;top:398px;width:275px;height:25px;background:#99d1fa"></div>
<div class="a" style="left:515px;top:374px;width:1px;height:125px;background:#e3e6ee"></div>
<div class="a" style="left:607px;top:374px;width:1px;height:125px;background:#e3e6ee"></div>
<div class="a" style="left:423px;top:422px;width:290px;height:1px;background:#e3e6ee"></div>
<div class="a" style="left:423px;top:447px;width:290px;height:1px;background:#e3e6ee"></div>
<div class="a" style="left:423px;top:472px;width:290px;height:1px;background:#e3e6ee"></div>
<div class="a" style="left:423px;top:497px;width:290px;height:1px;background:#e3e6ee"></div>
<div class="t" style="left:430px;top:378px">Control Name</div>
<div class="t" style="left:522px;top:378px">LID Type</div>
<div class="t" style="left:614px;top:378px">% of Area</div>
<div class="t" style="left:430px;top:403px">Bio-Retention</div>
<div class="t" style="left:522px;top:403px">Bio-Retention</div>
<div class="t" style="left:614px;top:403px;transform:scaleX(0.89);transform-origin:0 0">20.0</div>
<div class="t" style="left:430px;top:428px">RainGarden</div>
<div class="t" style="left:522px;top:428px">Bio-Retention</div>
<div class="t" style="left:614px;top:428px;transform:scaleX(0.89);transform-origin:0 0">10.000</div>
<div class="t" style="left:430px;top:453px">Infilt.Trench</div>
<div class="t" style="left:522px;top:453px">Infil. Trench</div>
<div class="t" style="left:614px;top:453px;transform:scaleX(0.89);transform-origin:0 0">30.0</div>
<!-- scrollbars -->
<div class="a" style="left:1449px;top:115px;width:17px;height:724px;background:#e8eaf3"></div>
<div class="a" style="left:1450px;top:132px;width:14px;height:531px;background:#cdcdcd"></div>
<svg style="left:1449px;top:115px" width="17" height="724"><path d="M4.5 12.5l4-4 4 4" fill="none" stroke="#505050" stroke-width="2"/><path d="M4.5 713l4 4 4-4" fill="none" stroke="#505050" stroke-width="2"/></svg>
<div class="a" style="left:208px;top:839px;width:1241px;height:16px;background:#e8eaf3"></div>
<div class="a" style="left:225px;top:839px;width:1175px;height:15px;background:#cdcdcd"></div>
<svg style="left:208px;top:839px" width="1241" height="16"><path d="M11.5 4l-4 4 4 4" fill="none" stroke="#505050" stroke-width="2"/><path d="M1230 4l4 4-4 4" fill="none" stroke="#505050" stroke-width="2"/></svg>
<div class="a" style="left:32px;top:855px;width:1435px;height:1px;background:#fff"></div>


<!-- status bar -->
<div class="a" style="left:32px;top:856px;width:1435px;height:31px;background:#e8eaf3"></div>
<div class="a" style="left:155px;top:859px;width:1px;height:25px;background:#6a6a6a"></div>
<div class="a" style="left:270px;top:859px;width:1px;height:25px;background:#6a6a6a"></div>
<div class="a" style="left:396px;top:859px;width:1px;height:25px;background:#6a6a6a"></div>
<div class="a" style="left:438px;top:859px;width:1px;height:25px;background:#6a6a6a"></div>
<div class="a" style="left:559px;top:859px;width:1px;height:25px;background:#6a6a6a"></div>
<div class="t" style="left:36px;top:864px">Auto-Length: Off</div>
<div class="t" style="left:167px;top:864px">Offsets: Depth</div>
<div class="t" style="left:282px;top:864px;transform:scaleX(0.963);transform-origin:0 0">Flow Units: CMS</div>
<div class="t" style="left:446px;top:864px;transform:scaleX(0.955);transform-origin:0 0">Zoom Level: 100%</div>
<div class="t" style="left:567px;top:864px;transform:scaleX(0.91);transform-origin:0 0">X,Y: 6674.888, 6893.498 m</div>
<svg style="left:0;top:860px" width="700" height="30" viewBox="0 860 700 30">
<path d="M141 869.5h8l-4 4.5Z" fill="#202020"/>
<path d="M256 869.5h8l-4 4.5Z" fill="#202020"/>
<path d="M382 869.5h8l-4 4.5Z" fill="#202020"/>
<path d="M405.5 872.5L407.5 866.5H414.5L413 872.5Z" fill="none" stroke="#3a8ee6" stroke-width="1.1"/><path d="M417.5 865.5L415 879" stroke="#5a3a10" stroke-width="2.6" stroke-linecap="round"/><path d="M417.5 865.5L415 879" stroke="#e09a40" stroke-width="1.4" stroke-linecap="round"/></svg>
<div class="a" style="left:887px;top:124px;width:513px;height:763px;border-radius:8px 8px 0 0;background:rgba(0,0,0,0.03)"></div>
<div class="a" style="left:892px;top:127px;width:504px;height:760px;border-radius:6px 6px 0 0;background:rgba(60,70,140,0.09)"></div>
<div class="a" style="left:896px;top:132px;width:494px;height:755px;background:#fff;border-left:1px solid #dcdcdc"></div>
<div class="a" style="left:1390px;top:148px;width:2px;height:739px;background:#b8b8b8"></div>
<div class="t g" style="left:905px;top:138px;color:#a0a0a0">Subcatchment Subcatchment</div>
<div class="a" style="left:1370px;top:139px;width:19px;height:19px;background:#e6e6e6"></div>
<svg style="left:1375px;top:144px" width="9" height="9"><path d="M1.5 1.5l6 6M7.5 1.5l-6 6" stroke="#f4f4f4" stroke-width="1"/></svg>
<div class="a" style="left:897px;top:162px;width:493px;height:23px;background:#e8eaf3;border:1px solid #6d6d6d;border-bottom:2px solid #6d6d6d;border-right:2px solid #6d6d6d;box-shadow:inset 1px 1px 0 #fff"></div>
<div class="a" style="left:1139px;top:164px;width:1px;height:19px;background:#9a9a9a"></div>
<div class="t" style="left:901px;top:166px">Property</div>
<div class="t" style="left:1143px;top:166px">Value</div>
<div class="a" style="left:1139px;top:185px;width:1px;height:671px;background:#a8a8a8"></div>
<div class="a" style="left:897px;top:208px;width:493px;height:1px;background:#c4c4c4"></div>
<div class="t" style="left:899px;top:187px">Name</div>
<div class="t" style="left:1142px;top:187px;color:#1a1a8a">Subcatchment</div>
<div class="a" style="left:897px;top:232px;width:493px;height:1px;background:#c4c4c4"></div>
<div class="t" style="left:899px;top:211px">X-Coordinate</div>
<div class="t" style="left:1142px;top:211px;color:#1a1a8a;transform:scaleX(0.89);transform-origin:0 0">2404.709</div>
<div class="a" style="left:897px;top:256px;width:493px;height:1px;background:#c4c4c4"></div>
<div class="t" style="left:899px;top:235px">Y-Coordinate</div>
<div class="t" style="left:1142px;top:235px;color:#1a1a8a;transform:scaleX(0.89);transform-origin:0 0">6806.054</div>
<div class="a" style="left:897px;top:280px;width:493px;height:1px;background:#c4c4c4"></div>
<div class="a" style="left:897px;top:304px;width:493px;height:1px;background:#c4c4c4"></div>
<div class="a" style="left:897px;top:328px;width:493px;height:1px;background:#c4c4c4"></div>
<div class="a" style="left:897px;top:352px;width:493px;height:1px;background:#c4c4c4"></div>
<div class="a" style="left:897px;top:376px;width:493px;height:1px;background:#c4c4c4"></div>
<div class="a" style="left:897px;top:400px;width:493px;height:1px;background:#c4c4c4"></div>
<div class="a" style="left:897px;top:424px;width:493px;height:1px;background:#c4c4c4"></div>
<div class="a" style="left:897px;top:448px;width:493px;height:1px;background:#c4c4c4"></div>
<div class="a" style="left:897px;top:472px;width:493px;height:1px;background:#c4c4c4"></div>
<div class="a" style="left:897px;top:496px;width:493px;height:1px;background:#c4c4c4"></div>
<div class="a" style="left:897px;top:520px;width:493px;height:1px;background:#c4c4c4"></div>
<div class="a" style="left:897px;top:544px;width:493px;height:1px;background:#c4c4c4"></div>
<div class="a" style="left:897px;top:568px;width:493px;height:1px;background:#c4c4c4"></div>
<div class="a" style="left:897px;top:592px;width:493px;height:1px;background:#c4c4c4"></div>
<div class="a" style="left:897px;top:616px;width:493px;height:1px;background:#c4c4c4"></div>
<div class="a" style="left:897px;top:640px;width:493px;height:1px;background:#c4c4c4"></div>
<div class="a" style="left:897px;top:664px;width:493px;height:1px;background:#c4c4c4"></div>
<div class="a" style="left:897px;top:688px;width:493px;height:1px;background:#c4c4c4"></div>
<div class="a" style="left:897px;top:712px;width:493px;height:1px;background:#c4c4c4"></div>
<div class="t" style="left:899px;top:691px">LID Controls</div>
<div class="t" style="left:1142px;top:691px;color:#202020">3</div>
<div class="a" style="left:897px;top:736px;width:493px;height:1px;background:#c4c4c4"></div>
<div class="t" style="left:899px;top:715px">Land Uses</div>
<div class="t" style="left:1142px;top:715px;color:#1a1a8a">0</div>
<div class="a" style="left:897px;top:760px;width:493px;height:1px;background:#c4c4c4"></div>
<div class="t" style="left:899px;top:739px">Initial Buildup</div>
<div class="t" style="left:1142px;top:739px;color:#1a1a8a">NONE</div>
<div class="a" style="left:897px;top:784px;width:493px;height:1px;background:#c4c4c4"></div>
<div class="t" style="left:899px;top:763px">Curb Length</div>
<div class="t" style="left:1142px;top:763px;color:#1a1a8a">0</div>
<div class="a" style="left:897px;top:808px;width:493px;height:1px;background:#c4c4c4"></div>
<div class="t" style="left:899px;top:787px">N-Perv Pattern</div>
<div class="a" style="left:897px;top:832px;width:493px;height:1px;background:#c4c4c4"></div>
<div class="t" style="left:899px;top:811px">Dstore Pattern</div>
<div class="a" style="left:897px;top:856px;width:493px;height:1px;background:#c4c4c4"></div>
<div class="t" style="left:899px;top:835px">Infil. Pattern</div>
<div class="a" style="left:1367px;top:690px;width:22px;height:21px;background:#e8eaf3;border-top:1px solid #fff;border-left:1px solid #fff;border-right:2px solid #696969;border-bottom:2px solid #696969"></div>
<svg style="left:1367px;top:690px" width="22" height="21"><rect x="6" y="10" width="2" height="2" fill="#000"/><rect x="11" y="10" width="2" height="2" fill="#000"/><rect x="16" y="10" width="2" height="2" fill="#000"/></svg>
<div class="a" style="left:897px;top:868px;width:493px;height:4px;background:#9c9c9c"></div>
<div class="a" style="left:897px;top:872px;width:493px;height:15px;background:#e8eaf3"></div>
<div class="t" style="left:899px;top:873px">LID controls (click to edit)</div>
<!-- LID usage editor -->
<div class="a" style="left:681px;top:246px;width:687px;height:459px;border-radius:14px;background:rgba(90,90,120,0.05)"></div>
<div class="a" style="left:687px;top:251px;width:677px;height:450px;border-radius:9px;background:rgba(90,90,120,0.07)"></div>
<div class="a" style="left:692px;top:255px;width:665px;height:440px;border-radius:4px;background:rgba(70,70,90,0.10)"></div>
<div class="a" style="left:697px;top:262px;width:660px;height:433px;border-radius:2px;background:rgba(0,0,0,0.09)"></div>
<div class="a" style="left:695px;top:258px;width:660px;height:433px;background:#e8eaf3;border:1px solid #555;border-right:2px solid #6a6a6a;border-bottom:2px solid #6a6a6a"></div>
<div class="a" style="left:696px;top:259px;width:657px;height:25px;background:#fff"></div>
<div class="t" style="left:700px;top:263px">LID Usage Editor</div>
<svg style="left:1331px;top:265px" width="13" height="13"><path d="M1 1l11 11M12 1L1 12" stroke="#111" stroke-width="1.1"/></svg>
<div class="t" style="left:712px;top:304px">LID Control Name</div>
<div class="a" style="left:840px;top:300px;width:169px;height:24px;background:#fff;border:1px solid #9a9a9a"></div>
<div class="a" style="left:843px;top:303px;width:146px;height:18px;border:1.5px solid #000"></div>
<svg style="left:994px;top:308px" width="12" height="8"><path d="M1.5 1.5l4.5 4.5 4.5-4.5" fill="none" stroke="#333" stroke-width="1.1"/></svg>
<!-- graphic -->
<svg style="left:700px;top:330px" width="320" height="220" viewBox="700 330 320 220">
<defs>
<linearGradient id="gtop" gradientUnits="userSpaceOnUse" x1="719.8" y1="435.5" x2="778.3" y2="537.3">
<stop offset="0" stop-color="#c0e870"/><stop offset="0.03" stop-color="#b3dd60"/><stop offset="0.13" stop-color="#afd95c"/><stop offset="0.135" stop-color="#a9d356"/><stop offset="0.42" stop-color="#a4cd53"/><stop offset="0.425" stop-color="#9dc54e"/><stop offset="0.68" stop-color="#98bf4b"/><stop offset="0.685" stop-color="#91b647"/><stop offset="1" stop-color="#8aae43"/>
</linearGradient>
<linearGradient id="gtop2" gradientUnits="userSpaceOnUse" x1="796" y1="391.5" x2="854.5" y2="493.3">
<stop offset="0" stop-color="#c0e870"/><stop offset="0.03" stop-color="#b3dd60"/><stop offset="0.13" stop-color="#afd95c"/><stop offset="0.135" stop-color="#a9d356"/><stop offset="0.42" stop-color="#a4cd53"/><stop offset="0.425" stop-color="#9dc54e"/><stop offset="0.68" stop-color="#98bf4b"/><stop offset="0.685" stop-color="#91b647"/><stop offset="1" stop-color="#8aae43"/>
</linearGradient>
<linearGradient id="ag" gradientUnits="objectBoundingBox" x1="0" y1="0" x2="0.3" y2="1"><stop offset="0.5" stop-color="#e6f6fd"/><stop offset="0.5" stop-color="#d6e6f0"/><stop offset="1" stop-color="#d6e6f0"/></linearGradient>
</defs>
<path d="M716 436L838.6 506L995.5 415.5L991.5 413L838.6 502.8L719.8 435.5Z" fill="#fff" opacity="0.95"/>
<path d="M872.8 345.8L995 414.6L991.5 414.9L872.8 347.6Z" fill="#fff" opacity="0.9"/>
<path d="M872.8 347.6L991.5 414.9L838.6 502.8L719.8 435.5Z" fill="url(#gtop2)"/>
<path d="M719.8 435.5L838.6 502.8L991.5 414.9L987.5 414.2L838.3 499.8L723.5 435.6Z" fill="#86b040"/>
<path d="M722 436.3L838.5 501.5" stroke="#c4ec78" stroke-width="1" opacity="0.9"/>
<path d="M719.8 435.5L838.6 502.8" stroke="#4f6e22" stroke-width="1" opacity="0.9"/>
<path d="M838.6 502.8L991.5 414.9L989 414.2L838.3 500.2Z" fill="#5a7d26"/>
<path d="M727 434.8L868 354" stroke="#c6ee7c" stroke-width="1" opacity="0.8"/>
<!-- arrows -->
<path d="M781.1 374.4L795.5 366.3L826 383.4L834.4 379.8L834.4 396.1L805.6 396.4L812.4 392.3Z" fill="url(#ag)" stroke="#6fa0d8" stroke-width="1"/>
<path d="M875 450.2L889.5 442.1L909.3 453.1L916.4 449.2L916.4 465.6L887.7 465.6L893.9 461.7Z" fill="url(#ag)" stroke="#6fa0d8" stroke-width="1"/>
<g stroke="#4a86c8" stroke-width="1.1" fill="none">
<path d="M740.5 451.5V490"/><path d="M736 484.5l4.5 5.5 4.5-5.5"/>
<path d="M780.5 475.5V515"/><path d="M776 509.5l4.5 5.5 4.5-5.5"/>
<path d="M812.5 492.5V532"/><path d="M808 526.5l4.5 5.5 4.5-5.5"/>
<path d="M854 516.5L995.5 429"/>
<path d="M862 516.5H854L858 509.5"/><path d="M987.5 429H995.5L991.5 436"/>
</g>
<text x="830.5" y="421" font-family="Liberation Sans" font-size="11.5" fill="#1a1a1a">LID Area</text>
<text x="0" y="0" font-family="Liberation Sans" font-size="11.5" fill="#1a1a1a" transform="translate(920 502) rotate(-31)">Width</text>
</svg>
<div class="t" style="left:712px;top:573px">Detailed Report File (Optional)</div>
<div class="a" style="left:953px;top:566px;width:21px;height:20px;background:#e1e1e1;border:1px solid #adadad"></div>
<svg style="left:953px;top:566px" width="21" height="20"><path d="M4.5 6V12.5H13V7.5H9L8 6Z" fill="#ffff60" stroke="#555" stroke-width="0.8"/><path d="M8 10h3v2h2v-2h2l1.5 3v4h-3v-2h-2v2h-3.5v-4Z" fill="#111"/></svg>
<div class="a" style="left:985px;top:566px;width:21px;height:20px;background:#e1e1e1;border:1px solid #adadad"></div>
<svg style="left:985px;top:566px" width="21" height="20"><path d="M4.5 4.5l11 11M15.5 4.5l-11 11" stroke="#000" stroke-width="1.8"/></svg>
<div class="a" style="left:712px;top:593px;width:297px;height:23px;background:#fff;border:1px solid #c8c8c8"></div>
<div class="a" style="left:1032px;top:300px;width:1px;height:341px;background:#a0a0a0"></div>
<!-- right part -->
<div class="a" style="left:1056px;top:296px;width:13px;height:13px;background:#fff;border:1px solid #333"></div>
<div class="t" style="left:1072px;top:295px">LID Occupies Full Subcatchment</div>
<div class="t" style="left:1056px;top:327px">Area of Each Unit (sq ft or sq m)</div>
<div class="a" style="left:1256px;top:324px;width:81px;height:23px;background:#fff;border:1px solid #7a7a7a"></div>
<div class="t" style="left:1259px;top:327px">0</div>
<div class="t" style="left:1056px;top:360px">Number of Units</div>
<div class="a" style="left:1256px;top:357px;width:65px;height:23px;background:#fff;border:1px solid #7a7a7a"></div>
<div class="t" style="left:1259px;top:360px">1</div>
<div class="a" style="left:1322px;top:358px;width:14px;height:11px;background:#e6e6e6;border:1px solid #b8b8b8"></div>
<div class="a" style="left:1322px;top:369px;width:14px;height:11px;background:#e6e6e6;border:1px solid #b8b8b8"></div>
<svg style="left:1322px;top:358px" width="14" height="22"><path d="M4 7h6l-3-3Z" fill="#222"/><path d="M4 14h6l-3 3Z" fill="#222"/></svg>
<div class="t" style="left:1056px;top:392px">% of Subcatchment Occupied</div>
<div class="t" style="left:1256px;top:392px;transform:scaleX(0.89);transform-origin:0 0">0.000</div>
<div class="t" style="left:1056px;top:419px">Surface Width per Unit (ft or m)</div>
<div class="a" style="left:1256px;top:416px;width:81px;height:23px;background:#fff;border:1px solid #7a7a7a"></div>
<div class="t" style="left:1259px;top:419px">0</div>
<div class="t" style="left:1056px;top:451px">% Initially Saturated</div>
<div class="a" style="left:1256px;top:448px;width:81px;height:23px;background:#fff;border:1px solid #7a7a7a"></div>
<div class="t" style="left:1259px;top:451px">0</div>
<div class="t" style="left:1056px;top:484px">% of Impervious Area Treated</div>
<div class="a" style="left:1256px;top:481px;width:81px;height:23px;background:#fff;border:1px solid #7a7a7a"></div>
<div class="t" style="left:1259px;top:484px">0</div>
<div class="t" style="left:1060px;top:517px">% of Pervious Area Treated</div>
<div class="a" style="left:1256px;top:514px;width:81px;height:23px;background:#fff;border:1px solid #7a7a7a"></div>
<div class="t" style="left:1259px;top:517px">0</div>
<div class="t" style="left:1056px;top:546px">Send Drain Flow To:</div>
<div class="t" style="left:1056px;top:562px">(Leave blank to use subcatchment outlet)</div>
<div class="a" style="left:1056px;top:586px;width:219px;height:23px;background:#fff;border:1px solid #7a7a7a"></div>
<div class="a" style="left:1056px;top:623px;width:13px;height:13px;background:#fff;border:1px solid #333"></div>
<div class="t" style="left:1072px;top:622px">Return all Outflow to Pervious Area</div>
<div class="a" style="left:1087px;top:652px;width:73px;height:23px;background:#e5e5e5;border:2px solid #0078d7"></div>
<div class="a" style="left:1175px;top:652px;width:73px;height:23px;background:#e5e5e5;border:1px solid #adadad"></div>
<div class="a" style="left:1263px;top:652px;width:73px;height:23px;background:#e5e5e5;border:1px solid #adadad"></div>
<div class="t" style="left:1087px;top:656px;width:73px;text-align:center">OK</div>
<div class="t" style="left:1175px;top:656px;width:73px;text-align:center">Cancel</div>
<div class="t" style="left:1263px;top:656px;width:73px;text-align:center">Help</div>

</body></html>
